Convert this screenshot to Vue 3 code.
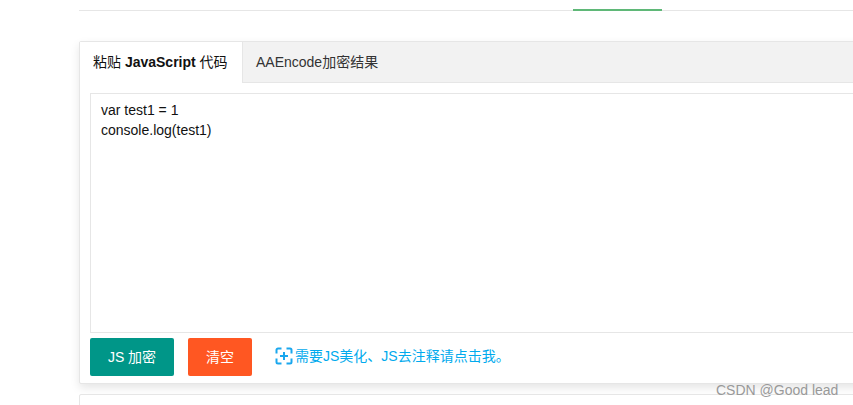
<script setup>
const code = 'var test1 = 1\nconsole.log(test1)'
</script>

<template>
  <div class="page">
    <div class="topnav"><span class="nav-active"></span></div>
    <section class="card main">
      <ul class="tabs">
        <li class="tab active">粘贴 <b>JavaScript</b> 代码</li>
        <li class="tab">AAEncode加密结果</li>
      </ul>
      <div class="body">
        <div class="editor">{{ code }}</div>
        <div class="actions">
          <button class="btn green">JS 加密</button>
          <button class="btn orange">清空</button>
          <a class="link">
            <svg class="icon" width="18" height="18" viewBox="0 0 18 18" fill="none" stroke="#1aa7ee" stroke-width="2">
              <path d="M6.5 1.5H3a1.5 1.5 0 0 0-1.5 1.5v3.5M11.5 1.5H15a1.5 1.5 0 0 1 1.5 1.5v3.5M6.5 16.5H3a1.5 1.5 0 0 1-1.5-1.5v-3.5M11.5 16.5H15a1.5 1.5 0 0 0 1.5-1.5v-3.5" />
              <path d="M5 9h8M9 5v8" />
            </svg>
            需要JS美化、JS去注释请点击我。
          </a>
        </div>
      </div>
    </section>
    <section class="card next"></section>
    <span class="watermark">CSDN @Good lead</span>
  </div>
</template>

<style>
html, body { margin: 0; overflow: hidden; background: #fff; }
</style>

<style scoped>
.page {
  position: relative;
  width: 853px;
  height: 405px;
  overflow: hidden;
  padding: 10px 0 0 79px;
  box-sizing: border-box;
  font: 14px/20px "Liberation Sans", "Noto Sans CJK SC", sans-serif;
  color: #111;
  background: #fff;
}
.topnav {
  position: relative;
  width: 900px;
  height: 1px;
  background: #e6e6e6;
}
.nav-active {
  position: absolute;
  left: 494px;
  top: -1px;
  width: 89px;
  height: 2px;
  background: #5fb878;
}
.card {
  width: 900px;
  margin-top: 30px;
  box-sizing: border-box;
  border: 1px solid #e6e6e6;
  border-radius: 2px;
  background: #fff;
}
.main {
  box-shadow: 0 4px 10px rgba(0, 0, 0, 0.1);
}
.next {
  margin-top: 10px;
  height: 40px;
}
.tabs {
  display: flex;
  height: 40px;
  margin: 0;
  padding: 0;
  list-style: none;
  background: #f2f2f2;
  border-bottom: 1px solid #e6e6e6;
}
.tab {
  padding: 0 13px;
  line-height: 40px;
  color: #333;
}
.tab.active {
  height: 41px;
  width: 136px;
  padding: 0 13px;
  background: #fff;
  border-right: 1px solid #e6e6e6;
  color: #111;
}
.tab.active b { color: #111; }
.body {
  padding: 10px 10px 7px;
}
.editor {
  height: 220px;
  padding: 6px 10px 12px;
  border: 1px solid #e6e6e6;
  white-space: pre;
  color: #111;
}
.actions {
  display: flex;
  align-items: center;
  margin-top: 5px;
}
.btn {
  height: 38px;
  border: 0;
  border-radius: 2px;
  padding: 0;
  color: #fff;
  font: inherit;
}
.green { width: 84px; background: #009688; }
.orange { width: 64px; margin-left: 14px; background: #ff5722; }
.link {
  display: flex;
  align-items: center;
  gap: 2px;
  margin: 0 0 3px 23px;
  color: #01aaed;
}
.icon { flex: none; }
.watermark {
  position: absolute;
  left: 716px;
  top: 381px;
  color: #999;
  font-size: 14px;
  line-height: 18px;
}
</style>
